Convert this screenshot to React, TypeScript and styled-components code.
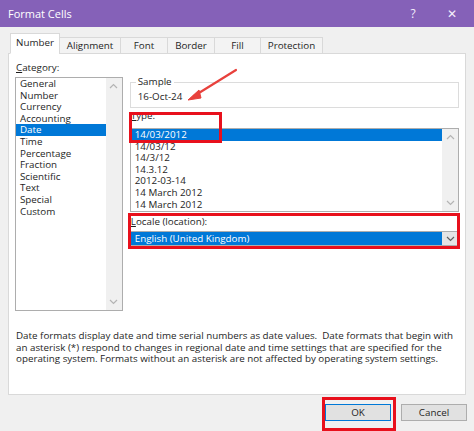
import React from "react";
import styled, { createGlobalStyle } from "styled-components";

const categories = [
  "General",
  "Number",
  "Currency",
  "Accounting",
  "Date",
  "Time",
  "Percentage",
  "Fraction",
  "Scientific",
  "Text",
  "Special",
  "Custom",
];

const types = [
  "14/03/2012",
  "14/03/12",
  "14/3/12",
  "14.3.12",
  "2012-03-14",
  "14 March 2012",
  "14 March 2012",
];

const tabs = [
  { label: "Number", width: 50 },
  { label: "Alignment", width: 62 },
  { label: "Font", width: 48 },
  { label: "Border", width: 48 },
  { label: "Fill", width: 47 },
  { label: "Protection", width: 63 },
];

export default function App() {
  return (
    <>
      <GlobalStyle />
      <Window>
        <TitleBar>
          <Title>Format Cells</Title>
          <TitleButton $width={38}>?</TitleButton>
          <TitleButton $width={40}>✕</TitleButton>
        </TitleBar>
        <Body>
          <TabRow>
            {tabs.map((t, i) => (
              <Tab key={t.label} $width={t.width} $active={i === 0}>
                {t.label}
              </Tab>
            ))}
          </TabRow>
          <Panel>
            <Columns>
              <LeftColumn>
                <Label>
                  <u>C</u>ategory:
                </Label>
                <ListBox $height={234}>
                  <Items>
                    {categories.map((c) => (
                      <Item key={c} $selected={c === "Date"}>
                        {c}
                      </Item>
                    ))}
                  </Items>
                  <ScrollBar>
                    <Chevron dir="up" />
                    <Chevron dir="down" />
                  </ScrollBar>
                </ListBox>
              </LeftColumn>
              <RightColumn>
                <SampleBox>
                  <Legend>Sample</Legend>
                  <SampleValue>16-Oct-24</SampleValue>
                </SampleBox>
                <Label $top={2} $bottom={6}>
                  <u>T</u>ype:
                </Label>
                <ListBox $height={84}>
                  <Items>
                    {types.map((t, i) => (
                      <Item key={i} $selected={i === 0}>
                        {t}
                      </Item>
                    ))}
                  </Items>
                  <ScrollBar>
                    <Chevron dir="up" />
                    <Chevron dir="down" />
                  </ScrollBar>
                </ListBox>
                <Label $top={4}>
                  <u>L</u>ocale (location):
                </Label>
                <Combo>
                  <ComboValue>English (United Kingdom)</ComboValue>
                  <ComboButton>
                    <Chevron dir="down" dark />
                  </ComboButton>
                </Combo>
              </RightColumn>
            </Columns>
            <Description>
              Date formats display date and time serial numbers as date values.&nbsp; Date
              formats that begin with
              <br />
              an asterisk (*) respond to changes in regional date and time settings that are
              specified for the
              <br />
              operating system. Formats without an asterisk are not affected by operating
              system settings.
            </Description>
          </Panel>
          <ButtonRow>
            <Button $default>OK</Button>
            <Button>Cancel</Button>
          </ButtonRow>
        </Body>

        {/* red annotations drawn on top of the screenshot */}
        <Highlight style={{ left: 129, top: 112, width: 93, height: 31 }} />
        <Highlight style={{ left: 128, top: 213, width: 332, height: 36 }} />
        <Highlight style={{ left: 322, top: 397, width: 74, height: 34 }} />
        <Arrow width="60" height="40" viewBox="0 0 60 40">
          <line x1="54" y1="4" x2="12" y2="30" stroke="#e8413c" strokeWidth="2.2" strokeLinecap="round" />
          <path d="M6 34 L17 24 L19 32 Z" fill="#e8413c" stroke="#e8413c" strokeWidth="1" strokeLinejoin="round" />
        </Arrow>
      </Window>
    </>
  );
}

function Chevron({ dir, dark }: { dir: "up" | "down"; dark?: boolean }) {
  return (
    <svg width="9" height="6" viewBox="0 0 9 6">
      <path
        d={dir === "up" ? "M1 5 L4.5 1.5 L8 5" : "M1 1 L4.5 4.5 L8 1"}
        fill="none"
        stroke={dark ? "#606060" : "#b4b4b4"}
        strokeWidth="1.2"
      />
    </svg>
  );
}

const GlobalStyle = createGlobalStyle`
  body {
    margin: 0;
    font-family: "Open Sans", "Noto Sans", sans-serif;
    color: #1e1e1e;
  }
`;

const Window = styled.div`
  position: relative;
  width: 474px;
  height: 431px;
  background: #f0f0f0;
  overflow: hidden;
  display: flex;
  flex-direction: column;
`;

const TitleBar = styled.div`
  height: 27px;
  flex-shrink: 0;
  background: #8561b8;
  color: #fff;
  display: flex;
  align-items: center;
  padding: 0 2px 0 8px;
`;

const Title = styled.div`
  flex: 1;
  font-size: 11px;
`;

const TitleButton = styled.div<{ $width: number }>`
  width: ${(p) => p.$width}px;
  text-align: center;
  font-size: 12px;
  color: #f4eefc;
`;

const Body = styled.div`
  flex: 1;
  padding: 6px 8px 0 8px;
  display: flex;
  flex-direction: column;
`;

const TabRow = styled.div`
  display: flex;
  align-items: flex-end;
  height: 21px;
  padding-left: 2px;
  position: relative;
  z-index: 1;
  margin-bottom: -1px;
`;

const Tab = styled.div<{ $width: number; $active?: boolean }>`
  width: ${(p) => p.$width}px;
  height: ${(p) => (p.$active ? 21 : 17)}px;
  box-sizing: border-box;
  display: flex;
  align-items: center;
  justify-content: center;
  font-size: 9.8px;
  background: ${(p) => (p.$active ? "#fff" : "#f3f3f3")};
  border: 1px solid #d9d9d9;
  border-bottom: ${(p) => (p.$active ? "1px solid #fff" : "1px solid #d9d9d9")};
  margin-left: ${(p) => (p.$active ? 0 : -1)}px;
  padding-bottom: ${(p) => (p.$active ? 2 : 0)}px;
`;

const Panel = styled.div`
  width: 458px;
  height: 342px;
  box-sizing: border-box;
  background: #fff;
  border: 1px solid #d9d9d9;
  padding: 8px 6px 0 6px;
  display: flex;
  flex-direction: column;
`;

const Columns = styled.div`
  display: flex;
  gap: 7px;
`;

const LeftColumn = styled.div`
  width: 108px;
  display: flex;
  flex-direction: column;
`;

const RightColumn = styled.div`
  width: 330px;
  display: flex;
  flex-direction: column;
  padding-top: 14px;
`;

const Label = styled.div<{ $top?: number; $bottom?: number }>`
  font-size: 9.8px;
  line-height: 12px;
  margin-top: ${(p) => p.$top ?? 0}px;
  margin-bottom: ${(p) => p.$bottom ?? 3}px;
  padding-left: 1px;
`;

const ListBox = styled.div<{ $height: number }>`
  height: ${(p) => p.$height}px;
  flex-shrink: 0;
  box-sizing: border-box;
  border: 1px solid #adadad;
  background: #fff;
  display: flex;
`;

const Items = styled.div`
  flex: 1;
  overflow: hidden;
`;

const Item = styled.div<{ $selected?: boolean }>`
  height: 11.6px;
  line-height: 11.6px;
  font-size: 9.8px;
  padding-left: 4px;
  white-space: nowrap;
  background: ${(p) => (p.$selected ? "#0078d7" : "transparent")};
  color: ${(p) => (p.$selected ? "#fff" : "#1e1e1e")};
`;

const ScrollBar = styled.div`
  width: 16px;
  background: #f0f0f0;
  display: flex;
  flex-direction: column;
  justify-content: space-between;
  align-items: center;
  padding: 5px 0;
`;

const SampleBox = styled.fieldset`
  margin: 0;
  height: 32px;
  flex-shrink: 0;
  box-sizing: border-box;
  border: 1px solid #dcdcdc;
  padding: 0 0 0 7px;
`;

const Legend = styled.legend`
  font-size: 9.8px;
  line-height: 12px;
  padding: 0 2px;
  margin-left: -2px;
`;

const SampleValue = styled.div`
  font-size: 9.8px;
  line-height: 12px;
  margin-top: 3px;
`;

const Combo = styled.div`
  height: 15px;
  box-sizing: border-box;
  border: 1px solid #adadad;
  display: flex;
  background: #fff;
`;

const ComboValue = styled.div`
  flex: 1;
  background: #0078d7;
  color: #fff;
  font-size: 9.8px;
  line-height: 13px;
  padding-left: 4px;
`;

const ComboButton = styled.div`
  width: 16px;
  background: #e5e5e5;
  display: flex;
  align-items: center;
  justify-content: center;
`;

const Description = styled.div`
  margin-top: 19px;
  font-size: 9.8px;
  line-height: 11.5px;
  padding-left: 1px;
  white-space: nowrap;
`;

const ButtonRow = styled.div`
  display: flex;
  justify-content: flex-end;
  gap: 10px;
  padding: 9px 0 0 0;
  margin-right: -1px;
`;

const Button = styled.div<{ $default?: boolean }>`
  width: 66px;
  height: 17px;
  box-sizing: border-box;
  background: #e1e1e1;
  border: 1px solid ${(p) => (p.$default ? "#0078d7" : "#adadad")};
  display: flex;
  align-items: center;
  justify-content: center;
  font-size: 9.8px;
`;

const Highlight = styled.div`
  position: absolute;
  box-sizing: border-box;
  border: 3px solid #e8101c;
  pointer-events: none;
`;

const Arrow = styled.svg`
  position: absolute;
  left: 182px;
  top: 66px;
  overflow: visible;
`;
